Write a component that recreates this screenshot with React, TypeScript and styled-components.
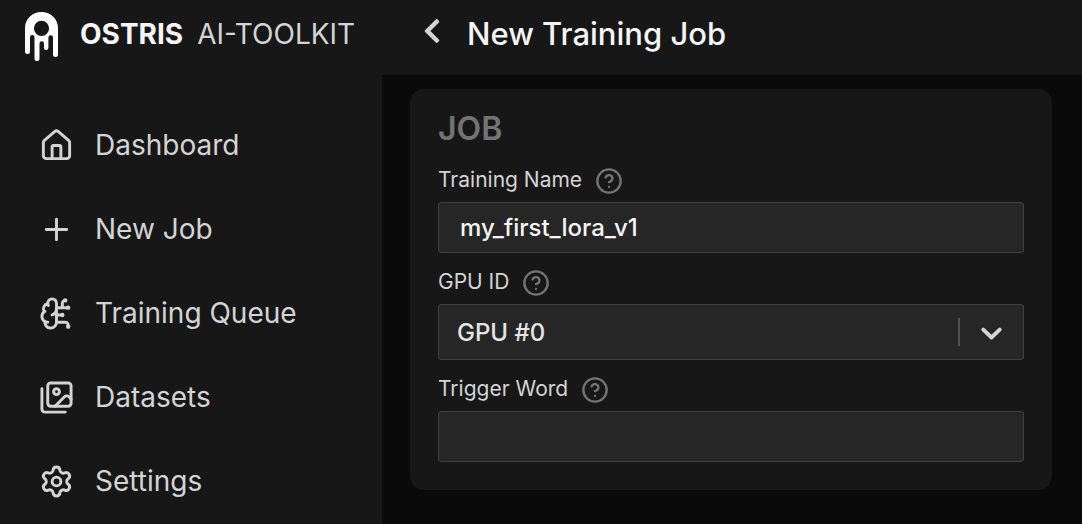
import React from "react";
import styled, { createGlobalStyle } from "styled-components";
import { BrainCircuit, CircleQuestionMark, House, Plus, Settings } from "lucide-react";
import { FaChevronLeft } from "react-icons/fa";

const GlobalStyle = createGlobalStyle`
  *, *::before, *::after { box-sizing: border-box; }
  body {
    margin: 0;
    background: #0a0a0a;
    color: #d4d4d4;
    font-family: Inter, "Liberation Sans", sans-serif;
  }
  button, input, select { font-family: inherit; }
`;

const Shell = styled.div`
  display: flex;
  min-height: 100vh;
`;

const Sidebar = styled.aside`
  flex: 0 0 382px;
  background: #171717;
`;

const Brand = styled.h1`
  display: flex;
  align-items: center;
  height: 68px;
  margin: 0;
  padding-left: 24px;
  font-size: 28px;
  line-height: 40px;
  font-weight: 400;
  white-space: nowrap;

  svg { margin-right: 21px; }
  strong { margin-right: 14px; font-weight: 700; color: #f5f5f5; }
`;

const NavList = styled.ul`
  list-style: none;
  margin: 0;
  padding: 42px 14px 0;
  display: flex;
  flex-direction: column;
  gap: 14px;
`;

const NavLink = styled.a`
  display: flex;
  align-items: center;
  gap: 21px;
  height: 70px;
  padding: 0 25px;
  color: #d4d4d4;
  font-size: 28px;
  line-height: 42px;
  text-decoration: none;

  svg { flex: none; width: 35px; height: 35px; }
`;

const Main = styled.main`
  flex: 1;
  min-width: 0;
`;

const TopBar = styled.header`
  display: flex;
  align-items: center;
  gap: 21px;
  height: 75px;
  padding: 0 14px 7px 36px;
  background: #171717;
`;

const BackButton = styled.button`
  display: flex;
  padding: 0 0 6px;
  border: 0;
  background: none;
  color: #d4d4d4;
`;

const PageTitle = styled.h2`
  margin: 0;
  font-size: 31px;
  line-height: 42px;
  font-weight: 500;
  color: #f5f5f5;
`;

const Card = styled.section`
  margin: 14px 30px 14px 28px;
  padding: 19px 28px 28px;
  border-radius: 14px;
  background: #171717;
`;

const CardTitle = styled.h3`
  margin: 0 0 15px;
  font-size: 32px;
  line-height: 42px;
  font-weight: 600;
  color: #737373;
`;

const Form = styled.form`
  display: flex;
  flex-direction: column;
  gap: 14px;
`;

const FieldHead = styled.div`
  display: flex;
  align-items: flex-start;
  gap: 13px;
  height: 37px;
`;

const Label = styled.label`
  font-size: 21px;
  line-height: 30px;
  color: #d4d4d4;
`;

const HelpButton = styled.button`
  display: flex;
  padding: 2px 0 0;
  border: 0;
  background: none;
  color: #737373;
`;

const TextInput = styled.input`
  display: block;
  width: 100%;
  height: 51px;
  padding: 0 21px;
  border: 1px solid #404040;
  border-radius: 3px;
  background: #262626;
  color: #f5f5f5;
  font-size: 24px;
  font-weight: 500;
  outline: none;
`;

const SelectBox = styled.div`
  display: flex;
  align-items: center;
  height: 56px;
  border: 1px solid #404040;
  border-radius: 3px;
  background: #262626;
`;

const Select = styled.select`
  flex: 1;
  height: 54px;
  padding: 0 18px;
  border: 0;
  appearance: none;
  background: transparent;
  color: #e5e5e5;
  font-size: 24px;
  font-weight: 500;
  outline: none;
`;

const Divider = styled.span`
  width: 2px;
  height: 28px;
  background: #525252;
`;

const Arrow = styled.svg`
  width: 35px;
  height: 35px;
  margin: 0 14px;
  fill: #d4d4d4;
`;

function Logo() {
  return (
    <svg width="35" height="54" viewBox="0 -4 35 54" aria-hidden="true">
      <path
        fill="#fff"
        fillRule="evenodd"
        d="M17.500 1C8 1 1 8 1 17V40.500a2.500 2.500 0 0 0 5 0V26.200a2.250 2.250 0 0 1 4.500 0V47.500a2.500 2.500 0 0 0 5 0V32.500a2.250 2.250 0 0 1 4.500 0V36.800a2.200 2.200 0 0 0 4.400 0V26.500a2.300 2.300 0 0 1 4.600 0V43.500a2.500 2.500 0 0 0 5 0V17C34 8 27 1 17.500 1ZM17.500 9.700a7.600 7.600 0 1 1 0 15.200a7.600 7.600 0 0 1 0-15.200Z"
      />
    </svg>
  );
}

function ImageStack() {
  return (
    <svg
      viewBox="0 0 24 24"
      fill="none"
      stroke="currentColor"
      strokeWidth="2"
      strokeLinecap="round"
      strokeLinejoin="round"
      aria-hidden="true"
    >
      <path d="M18 22H4a2 2 0 0 1-2-2V6" />
      <path d="m22 13-1.296-1.296a2.410 2.410 0 0 0-3.408 0L11 18" />
      <circle cx="12" cy="8" r="2" />
      <rect width="16" height="16" x="6" y="2" rx="2" />
    </svg>
  );
}

const links = [
  { name: "Dashboard", href: "#dashboard", Icon: House },
  { name: "New Job", href: "#new", Icon: Plus },
  { name: "Training Queue", href: "#queue", Icon: BrainCircuit },
  { name: "Datasets", href: "#datasets", Icon: ImageStack },
  { name: "Settings", href: "#settings", Icon: Settings },
];

function Field({ id, label, children }: { id: string; label: string; children: React.ReactNode }) {
  return (
    <div>
      <FieldHead>
        <Label htmlFor={id}>{label}</Label>
        <HelpButton type="button" aria-label={`Help: ${label}`}>
          <CircleQuestionMark size={28} />
        </HelpButton>
      </FieldHead>
      {children}
    </div>
  );
}

export default function App() {
  return (
    <Shell>
      <GlobalStyle />
      <Sidebar>
        <Brand>
          <Logo />
          <strong>OSTRIS</strong>
          <span>AI-TOOLKIT</span>
        </Brand>
        <nav>
          <NavList>
            {links.map(({ name, href, Icon }) => (
              <li key={name}>
                <NavLink href={href}>
                  <Icon />
                  {name}
                </NavLink>
              </li>
            ))}
          </NavList>
        </nav>
      </Sidebar>
      <Main>
        <TopBar>
          <BackButton type="button" aria-label="Back">
            <FaChevronLeft size={28} />
          </BackButton>
          <PageTitle>New Training Job</PageTitle>
        </TopBar>
        <Card>
          <CardTitle>JOB</CardTitle>
          <Form>
            <Field id="name" label="Training Name">
              <TextInput id="name" type="text" defaultValue="my_first_lora_v1" />
            </Field>
            <Field id="gpu" label="GPU ID">
              <SelectBox>
                <Select id="gpu" defaultValue="0">
                  <option value="0">GPU #0</option>
                </Select>
                <Divider />
                <Arrow viewBox="0 0 20 20" aria-hidden="true">
                  <path d="M4.516 7.548c0.436-0.446 1.043-0.481 1.576 0l3.908 3.747 3.908-3.747c0.533-0.481 1.141-0.446 1.574 0 0.436 0.445 0.408 1.197 0 1.615-0.406 0.418-4.695 4.502-4.695 4.502-0.217 0.223-0.502 0.335-0.787 0.335s-0.570-0.112-0.789-0.335c0 0-4.287-4.084-4.695-4.502s-0.436-1.170 0-1.615z" />
                </Arrow>
              </SelectBox>
            </Field>
            <Field id="trigger" label="Trigger Word">
              <TextInput id="trigger" type="text" />
            </Field>
          </Form>
        </Card>
      </Main>
    </Shell>
  );
}
